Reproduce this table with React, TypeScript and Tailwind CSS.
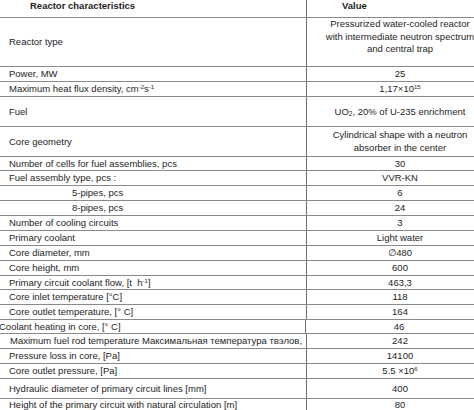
import React from "react";

type Row = {
  h: string;
  left: React.ReactNode;
  right: React.ReactNode;
  leftClass?: string;
  rightClass?: string;
  align?: string;
};

const rows: Row[] = [
  {
    h: "h-[49px]",
    left: "Reactor type",
    right: (
      <>
        Pressurized water-cooled reactor
        <br />
        with intermediate neutron spectrum
        <br />
        and central trap
      </>
    ),
    rightClass: "items-start leading-[12.5px]",
  },
  { h: "h-[15px]", left: "Power, MW", right: "25" },
  {
    h: "h-[15px]",
    left: (
      <>
        Maximum heat flux density, cm
        <sup className="text-[6px]">-2</sup>s<sup className="text-[6px]">-1</sup>
      </>
    ),
    right: (
      <>
        1,17×10<sup className="text-[6px]">15</sup>
      </>
    ),
  },
  {
    h: "h-[30px]",
    left: "Fuel",
    right: (
      <>
        UO<sub className="text-[6.5px]">2</sub>, 20% of U-235 enrichment
      </>
    ),
  },
  {
    h: "h-[30px]",
    left: "Core geometry",
    right: (
      <>
        Cylindrical shape with a neutron
        <br />
        absorber in the center
      </>
    ),
    rightClass: "items-center leading-[12.5px]",
  },
  { h: "h-[14px]", left: "Number of cells for fuel assemblies, pcs", right: "30" },
  { h: "h-[15px]", left: "Fuel assembly type, pcs :", right: "VVR-KN" },
  { h: "h-[15px]", left: "5-pipes, pcs", right: "6", leftClass: "pl-[72px]" },
  { h: "h-[15px]", left: "8-pipes, pcs", right: "24", leftClass: "pl-[72px]" },
  { h: "h-[15px]", left: "Number of cooling circuits", right: "3" },
  { h: "h-[15px]", left: "Primary coolant", right: "Light water" },
  { h: "h-[15px]", left: "Core diameter, mm", right: "∅480" },
  { h: "h-[15px]", left: "Core height, mm", right: "600" },
  {
    h: "h-[14px]",
    left: (
      <>
        Primary circuit coolant flow, [t&nbsp;&nbsp;h<sup className="text-[6px]">-1</sup>]
      </>
    ),
    right: "463,3",
  },
  { h: "h-[15px]", left: "Core inlet temperature [°C]", right: "118" },
  { h: "h-[15px]", left: "Core outlet temperature, [° C]", right: "164" },
  {
    h: "h-[14px]",
    left: "Coolant heating in core, [° C]",
    right: "46",
    leftClass: "pl-0 -ml-[1px]",
  },
  {
    h: "h-[15px]",
    left: "Maximum fuel rod temperature Максимальная температура твэлов,",
    right: "242",
    leftClass: "pl-[10px]",
  },
  { h: "h-[15px]", left: "Pressure loss in core, [Pa]", right: "14100" },
  {
    h: "h-[15px]",
    left: "Core outlet pressure, [Pa]",
    right: (
      <>
        5.5 ×10<sup className="text-[6px]">6</sup>
      </>
    ),
  },
  { h: "h-[20px]", left: "Hydraulic diameter of primary circuit lines [mm]", right: "400" },
  {
    h: "h-[11px]",
    left: "Height of the primary circuit with natural circulation [m]",
    right: "80",
    align: "items-start leading-[11px]",
  },
];

export default function App() {
  return (
    <div
      className="h-[410px] w-[474px] overflow-hidden bg-white text-[9.5px] text-[#1e1e1e]"
      style={{ fontFamily: '"Liberation Sans", Arial, "DejaVu Sans", sans-serif' }}
    >
      <div className="w-[493px]">
        {/* Header */}
        <div className="flex h-[18px] border-b border-[#8a8a8a]">
          <div className="w-[307px] shrink-0 border-r border-[#6f6f6f] pl-[30px] font-bold leading-[12px]">
            Reactor characteristics
          </div>
          <div className="w-[186px] pl-[35px] font-bold leading-[12px]">Value</div>
        </div>

        {rows.map((r, i) => (
          <div
            key={i}
            className={`flex ${r.h} ${i < rows.length - 1 ? "border-b border-[#8a8a8a]" : ""}`}
          >
            <div
              className={`flex w-[307px] shrink-0 overflow-visible whitespace-nowrap border-r border-[#6f6f6f] ${
                r.align ?? "items-center leading-[12px]"
              } ${r.leftClass ?? "pl-[9px]"}`}
            >
              <span>{r.left}</span>
            </div>
            <div
              className={`flex w-[186px] justify-center whitespace-nowrap text-center ${
                r.rightClass ?? r.align ?? "items-center leading-[12px]"
              }`}
            >
              <span>{r.right}</span>
            </div>
          </div>
        ))}
      </div>
    </div>
  );
}
